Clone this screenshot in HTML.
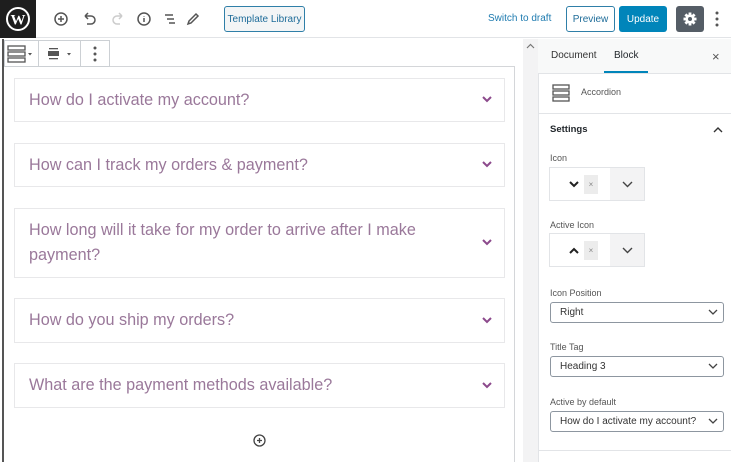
<!DOCTYPE html>
<html><head><meta charset="utf-8"><style>
*{box-sizing:border-box;margin:0;padding:0}
body{width:731px;height:462px;overflow:hidden;background:#fff;font-family:"Liberation Sans",sans-serif;position:relative;color:#23282d}
.abs{position:absolute}
.top{left:0;top:0;width:731px;height:38px;border-bottom:1px solid #e2e4e7;background:#fff}
.wp{left:0;top:0;width:36px;height:38px;background:#1e1e1e}
.btn{border-radius:3px;font-size:10px;display:flex;align-items:center;justify-content:center}
.item{left:14px;width:491px;border:1px solid #e8e8ea;background:#fff;color:#9a789a;font-size:16.2px;padding-left:14px;display:flex;align-items:center;line-height:25px}
.item .chev{position:absolute;right:12px;top:50%;margin-top:-5px}
.lbl{left:550px;font-size:9px;color:#555}
.sel{left:550px;width:174px;height:21px;border:1px solid #8d96a0;border-radius:3px;font-size:10px;padding-left:9px;display:flex;align-items:center;color:#333}
.sel svg{position:absolute;right:5px;top:6px}
.ibox{left:549px;width:96px;height:34px;border:1px solid #e2e4e7}
</style></head><body>
<div class="abs top"></div>
<div class="abs wp"><svg width="36" height="38" viewBox="0 0 36 38"><circle cx="18" cy="19" r="11" fill="none" stroke="#fff" stroke-width="2"/><text x="18" y="24.5" font-size="15" font-weight="bold" fill="#fff" text-anchor="middle" font-family="Liberation Serif">W</text></svg></div>
<svg class="abs" style="left:52px;top:10px" width="160" height="18" viewBox="0 0 160 18" fill="none" stroke="#555" stroke-width="1.5">
<circle cx="9" cy="9" r="6"/><path d="M9 6v6M6 9h6"/>
<path d="M33 6h6a4 4 0 0 1 0 8h-4M33 6l3-3M33 6l3 3"/>
<path d="M70 6h-5a4 4 0 0 0 0 8h3M70 6l-3-3M70 6l-3 3" stroke="#ccc"/>
<circle cx="92" cy="9" r="6"/><path d="M92 8v4M92 6v.5"/>
<path d="M113 5h8M115 9h7M117 13h6"/>
<path d="M136 14l1-3 7-7 2 2-7 7z"/>
</svg>
<div class="abs btn" style="left:224px;top:6px;width:81px;height:26px;border:1px solid #2f7fa8;background:#f3f5f6;color:#1e6c99">Template Library</div>
<div class="abs" style="left:488px;top:13px;font-size:10px;color:#1e7bb0">Switch to draft</div>
<div class="abs btn" style="left:566px;top:6px;width:49px;height:26px;border:1px solid #2f7fa8;color:#1e6c99">Preview</div>
<div class="abs btn" style="left:619px;top:6px;width:48px;height:26px;background:#0085ba;color:#fff">Update</div>
<div class="abs btn" style="left:676px;top:6px;width:28px;height:26px;background:#555d66;color:#fff"><svg width="14" height="14" viewBox="0 0 14 14"><g fill="#fff"><circle cx="7" cy="7" r="4.6"/><rect x="5.6" y="0.5" width="2.8" height="13"/><rect x="0.5" y="5.6" width="13" height="2.8"/><rect x="5.6" y="0.5" width="2.8" height="13" transform="rotate(45 7 7)"/><rect x="5.6" y="0.5" width="2.8" height="13" transform="rotate(-45 7 7)"/></g><circle cx="7" cy="7" r="2" fill="#555d66"/></svg></div>
<svg class="abs" style="left:714px;top:11px" width="6" height="16"><circle cx="3" cy="2" r="1.5" fill="#555"/><circle cx="3" cy="8" r="1.5" fill="#555"/><circle cx="3" cy="14" r="1.5" fill="#555"/></svg>

<div class="abs" style="left:2px;top:39px;width:2px;height:423px;background:#555"></div>
<div class="abs" style="left:4px;top:66px;width:511px;height:396px;border:1px solid #d4d6d9;border-left:none;border-bottom:none"></div>
<div class="abs" style="left:4px;top:40px;width:106px;height:27px;border:1px solid #ccd0d4;background:#fff"></div>
<div class="abs" style="left:38px;top:41px;width:1px;height:25px;background:#ccd0d4"></div>
<div class="abs" style="left:80px;top:41px;width:1px;height:25px;background:#ccd0d4"></div>
<svg class="abs" style="left:7px;top:44px" width="100" height="20" fill="#555">
<rect x="1" y="2" width="17" height="4" fill="none" stroke="#555" stroke-width="1.3"/><rect x="1" y="8" width="17" height="4" fill="none" stroke="#555" stroke-width="1.3"/><rect x="1" y="14" width="17" height="4" fill="none" stroke="#555" stroke-width="1.3"/>
<path d="M21 9h4l-2 2.5z"/>
<rect x="42" y="4" width="9" height="1.3"/><rect x="41" y="7" width="11" height="5"/><rect x="42" y="14" width="9" height="1.3"/>
<path d="M60 9h4l-2 2.5z"/>
<circle cx="88" cy="4" r="1.5"/><circle cx="88" cy="10" r="1.5"/><circle cx="88" cy="16" r="1.5"/>
</svg>

<div class="abs item" style="top:78px;height:44px">How do I activate my account?<svg class="chev" width="10" height="8"><path d="M1 2l4 4 4-4" fill="none" stroke="#8c4a8c" stroke-width="2"/></svg></div>
<div class="abs item" style="top:143px;height:44px">How can I track my orders &amp; payment?<svg class="chev" width="10" height="8"><path d="M1 2l4 4 4-4" fill="none" stroke="#8c4a8c" stroke-width="2"/></svg></div>
<div class="abs item" style="top:208px;height:70px">How long will it take for my order to arrive after I make<br>payment?<svg class="chev" width="10" height="8"><path d="M1 2l4 4 4-4" fill="none" stroke="#8c4a8c" stroke-width="2"/></svg></div>
<div class="abs item" style="top:298px;height:45px">How do you ship my orders?<svg class="chev" width="10" height="8"><path d="M1 2l4 4 4-4" fill="none" stroke="#8c4a8c" stroke-width="2"/></svg></div>
<div class="abs item" style="top:363px;height:45px">What are the payment methods available?<svg class="chev" width="10" height="8"><path d="M1 2l4 4 4-4" fill="none" stroke="#8c4a8c" stroke-width="2"/></svg></div>
<svg class="abs" style="left:253px;top:434px" width="13" height="13" fill="none" stroke="#444" stroke-width="1.3"><circle cx="6.5" cy="6.5" r="5.5"/><path d="M6.5 4v5M4 6.5h5"/></svg>

<div class="abs" style="left:523px;top:39px;width:15px;height:423px;background:#f3f3f4"></div>
<svg class="abs" style="left:526px;top:43px" width="9" height="6"><path d="M1 5l3.5-3.5L8 5" fill="none" stroke="#777" stroke-width="1.2"/></svg>

<div class="abs" style="left:538px;top:39px;width:193px;height:423px;background:#fff;border-left:1px solid #e2e4e7"></div>
<div class="abs" style="left:538px;top:39px;width:193px;height:35px;background:#f8f9f9;border-bottom:1px solid #e2e4e7"></div>
<div class="abs" style="left:551px;top:50px;font-size:10px;color:#333">Document</div>
<div class="abs" style="left:614px;top:50px;font-size:10px;color:#23282d">Block</div>
<div class="abs" style="left:604px;top:71px;width:44px;height:2px;background:#0085ba"></div>
<div class="abs" style="left:712px;top:49px;font-size:13px;color:#555">×</div>
<svg class="abs" style="left:552px;top:84px" width="18" height="18" fill="none" stroke="#555" stroke-width="1.3"><rect x="1" y="1" width="16" height="4"/><rect x="1" y="7" width="16" height="4"/><rect x="1" y="13" width="16" height="4"/></svg>
<div class="abs" style="left:581px;top:87px;font-size:9px;color:#555">Accordion</div>
<div class="abs" style="left:539px;top:113px;width:192px;height:1px;background:#e2e4e7"></div>
<div class="abs" style="left:550px;top:124px;font-size:9.5px;color:#23282d;font-weight:bold">Settings</div>
<svg class="abs" style="left:713px;top:126px" width="10" height="7"><path d="M1 6l4-4 4 4" fill="none" stroke="#333" stroke-width="1.4"/></svg>

<div class="abs lbl" style="top:153px">Icon</div>
<div class="abs ibox" style="top:167px"></div>
<div class="abs" style="left:610px;top:168px;width:34px;height:32px;background:#f3f3f4"></div>
<div class="abs" style="left:564px;top:175px;width:34px;height:19px;background:#fff"></div>
<div class="abs" style="left:584px;top:175px;width:14px;height:19px;background:#ececec;font-size:8px;color:#888;text-align:center;line-height:19px">×</div>
<svg class="abs" style="left:569px;top:181px" width="10" height="7"><path d="M1 1l4 4 4-4" fill="none" stroke="#222" stroke-width="2"/></svg>
<svg class="abs" style="left:622px;top:181px" width="11" height="7"><path d="M1 1l4.5 4.5L10 1" fill="none" stroke="#444" stroke-width="1.4"/></svg>

<div class="abs lbl" style="top:220px">Active Icon</div>
<div class="abs ibox" style="top:233px"></div>
<div class="abs" style="left:610px;top:234px;width:34px;height:32px;background:#f3f3f4"></div>
<div class="abs" style="left:564px;top:241px;width:34px;height:19px;background:#fff"></div>
<div class="abs" style="left:584px;top:241px;width:14px;height:19px;background:#ececec;font-size:8px;color:#888;text-align:center;line-height:19px">×</div>
<svg class="abs" style="left:569px;top:247px" width="10" height="7"><path d="M1 6l4-4 4 4" fill="none" stroke="#222" stroke-width="2"/></svg>
<svg class="abs" style="left:622px;top:247px" width="11" height="7"><path d="M1 1l4.5 4.5L10 1" fill="none" stroke="#444" stroke-width="1.4"/></svg>

<div class="abs lbl" style="top:288px">Icon Position</div>
<div class="abs sel" style="top:302px">Right<svg width="10" height="7"><path d="M1 1l4 4 4-4" fill="none" stroke="#444" stroke-width="1.3"/></svg></div>
<div class="abs lbl" style="top:342px">Title Tag</div>
<div class="abs sel" style="top:356px">Heading 3<svg width="10" height="7"><path d="M1 1l4 4 4-4" fill="none" stroke="#444" stroke-width="1.3"/></svg></div>
<div class="abs lbl" style="top:397px">Active by default</div>
<div class="abs sel" style="top:411px">How do I activate my account?<svg width="10" height="7"><path d="M1 1l4 4 4-4" fill="none" stroke="#444" stroke-width="1.3"/></svg></div>
<div class="abs" style="left:539px;top:450px;width:192px;height:1px;background:#e2e4e7"></div>
</body></html>
